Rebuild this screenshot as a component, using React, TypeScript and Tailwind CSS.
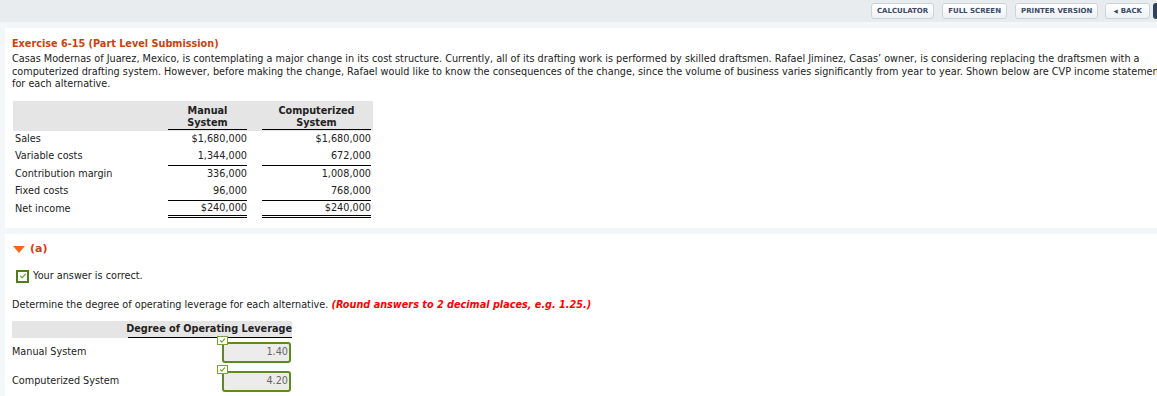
import React from "react";

const rows = [
  { label: "Sales", manual: "$1,680,000", comp: "$1,680,000", line: "" },
  { label: "Variable costs", manual: "1,344,000", comp: "672,000", line: "single" },
  { label: "Contribution margin", manual: "336,000", comp: "1,008,000", line: "" },
  { label: "Fixed costs", manual: "96,000", comp: "768,000", line: "single" },
  { label: "Net income", manual: "$240,000", comp: "$240,000", line: "double" },
];

function TopButton({ children, wide }: { children: React.ReactNode; wide?: boolean }) {
  return (
    <div
      className={
        "h-[16px] flex items-center rounded-[3px] border border-[#cdd3db] bg-gradient-to-b from-white to-[#eef0f3] text-[7px] font-bold text-[#3b4a66] whitespace-nowrap " +
        (wide ? "px-[7px] text-[7.5px]" : "px-[5px]")
      }
    >
      {children}
    </div>
  );
}

function CheckIcon({ className }: { className?: string }) {
  return (
    <svg viewBox="0 0 10 10" className={className} fill="none" stroke="currentColor" strokeWidth={1.6} strokeLinecap="round" strokeLinejoin="round">
      <path d="M2 5.3l2 2 4-4.6" />
    </svg>
  );
}

function AnswerInput({ value }: { value: string }) {
  return (
    <div className="relative w-[69px] h-[21px]">
      <div className="absolute -left-[5px] -top-[6px] w-[11px] h-[9px] bg-white border border-[#7aa03a] flex items-center justify-center">
        <CheckIcon className="w-[7px] h-[7px] text-[#6aa53a]" />
      </div>
      <div className="w-full h-full rounded-[3px] border-2 border-[#5e8b1f] bg-[#ececec] flex items-center justify-end pr-[1px] text-[9.7px] text-[#666]">
        {value}
      </div>
    </div>
  );
}

export default function App() {
  return (
    <div className="w-[1157px] h-[396px] overflow-hidden bg-[#f4f7fa] font-['DejaVu_Sans',sans-serif] text-[9.7px] text-[#222]">
      <div className="w-[1190px]">
        {/* top toolbar */}
        <div className="h-[22px] bg-[#e9ecef] flex items-center justify-end gap-[8px] pr-[4px]">
          <TopButton>CALCULATOR</TopButton>
          <TopButton>FULL SCREEN</TopButton>
          <div className="mr-[-1px]">
            <TopButton>PRINTER VERSION</TopButton>
          </div>
          <TopButton wide>
            <span className="text-[5.5px] mr-[3px]">◀</span>BACK
          </TopButton>
          <div className="h-[16px] w-[33px] rounded-[3px] bg-[#33415c] -ml-[5px]" />
        </div>

        {/* problem panel */}
        <div className="mt-[6px] ml-[5px] h-[200px] bg-white pl-[7px] pt-[10px]">
          <div className="font-bold text-[#c9430f] leading-[12px]">Exercise 6-15 (Part Level Submission)</div>
          <p className="mt-[3px] leading-[12.5px] whitespace-nowrap">
            Casas Modernas of Juarez, Mexico, is contemplating a major change in its cost structure. Currently, all of its drafting work is performed by skilled draftsmen. Rafael Jiminez, Casas’ owner, is considering replacing the draftsmen with a
            <br />
            computerized drafting system. However, before making the change, Rafael would like to know the consequences of the change, since the volume of business varies significantly from year to year. Shown below are CVP income statements
            <br />
            for each alternative.
          </p>

          <div className="mt-[10px] ml-[1px] w-[360px]">
            <div className="h-[30px] bg-[#e5e5e5] grid grid-cols-[155px_79px_15px_109px] pr-[2px]">
              <div />
              <div className="flex flex-col justify-center items-center font-bold leading-[12px] border-b border-black mb-[4px] pt-[4px]">
                <span>Manual</span>
                <span>System</span>
              </div>
              <div />
              <div className="flex flex-col justify-center items-center font-bold leading-[12px] border-b border-black mb-[4px] pt-[4px]">
                <span>Computerized</span>
                <span>System</span>
              </div>
            </div>
            {rows.map((r) => (
              <div key={r.label} className="h-[17.5px] grid grid-cols-[155px_79px_15px_109px] pr-[2px]">
                <div className="pl-[2px] flex items-center">{r.label}</div>
                <div
                  className={
                    "flex items-center justify-end " +
                    (r.line === "single" ? "border-b border-black" : r.line === "double" ? "border-b-[3px] border-double border-black" : "")
                  }
                >
                  {r.manual}
                </div>
                <div />
                <div
                  className={
                    "flex items-center justify-end " +
                    (r.line === "single" ? "border-b border-black" : r.line === "double" ? "border-b-[3px] border-double border-black" : "")
                  }
                >
                  {r.comp}
                </div>
              </div>
            ))}
          </div>
        </div>

        {/* part (a) panel */}
        <div className="mt-[6px] ml-[5px] h-[200px] bg-white pl-[7px] pt-[9px]">
          <div className="flex items-center h-[12px]">
            <svg viewBox="0 0 12 7" className="w-[12px] h-[7px] ml-[1px]">
              <path d="M0 0h12L6 7z" fill="#f2691e" />
            </svg>
            <span className="ml-[5px] text-[11px] font-bold text-[#c9430f]">(a)</span>
          </div>

          <div className="mt-[14px] flex items-center ml-[4px]">
            <div className="w-[13px] h-[13px] border-2 border-[#4e7d1c] bg-white flex items-center justify-center">
              <CheckIcon className="w-[8px] h-[8px] text-[#6aa53a]" />
            </div>
            <span className="ml-[4px]">Your answer is correct.</span>
          </div>

          <div className="mt-[15px] leading-[12px]">
            Determine the degree of operating leverage for each alternative.{" "}
            <span className="font-bold italic text-[#f00]">(Round answers to 2 decimal places, e.g. 1.25.)</span>
          </div>

          <div className="mt-[10px] w-[280px]">
            <div className="h-[17px] bg-[#e5e5e5] grid grid-cols-[116px_164px]">
              <div />
              <div className="font-bold flex items-center justify-end border-b border-black leading-[12px] whitespace-nowrap">Degree of Operating Leverage</div>
            </div>
            <div className="h-[29px] grid grid-cols-[116px_164px] items-center">
              <div className="pt-[1px]">Manual System</div>
              <div className="flex justify-end pr-[1px] pt-[1px]">
                <AnswerInput value="1.40" />
              </div>
            </div>
            <div className="h-[29px] grid grid-cols-[116px_164px] items-center">
              <div className="pt-[1px]">Computerized System</div>
              <div className="flex justify-end pr-[1px] pt-[1px]">
                <AnswerInput value="4.20" />
              </div>
            </div>
          </div>
        </div>
      </div>
    </div>
  );
}
